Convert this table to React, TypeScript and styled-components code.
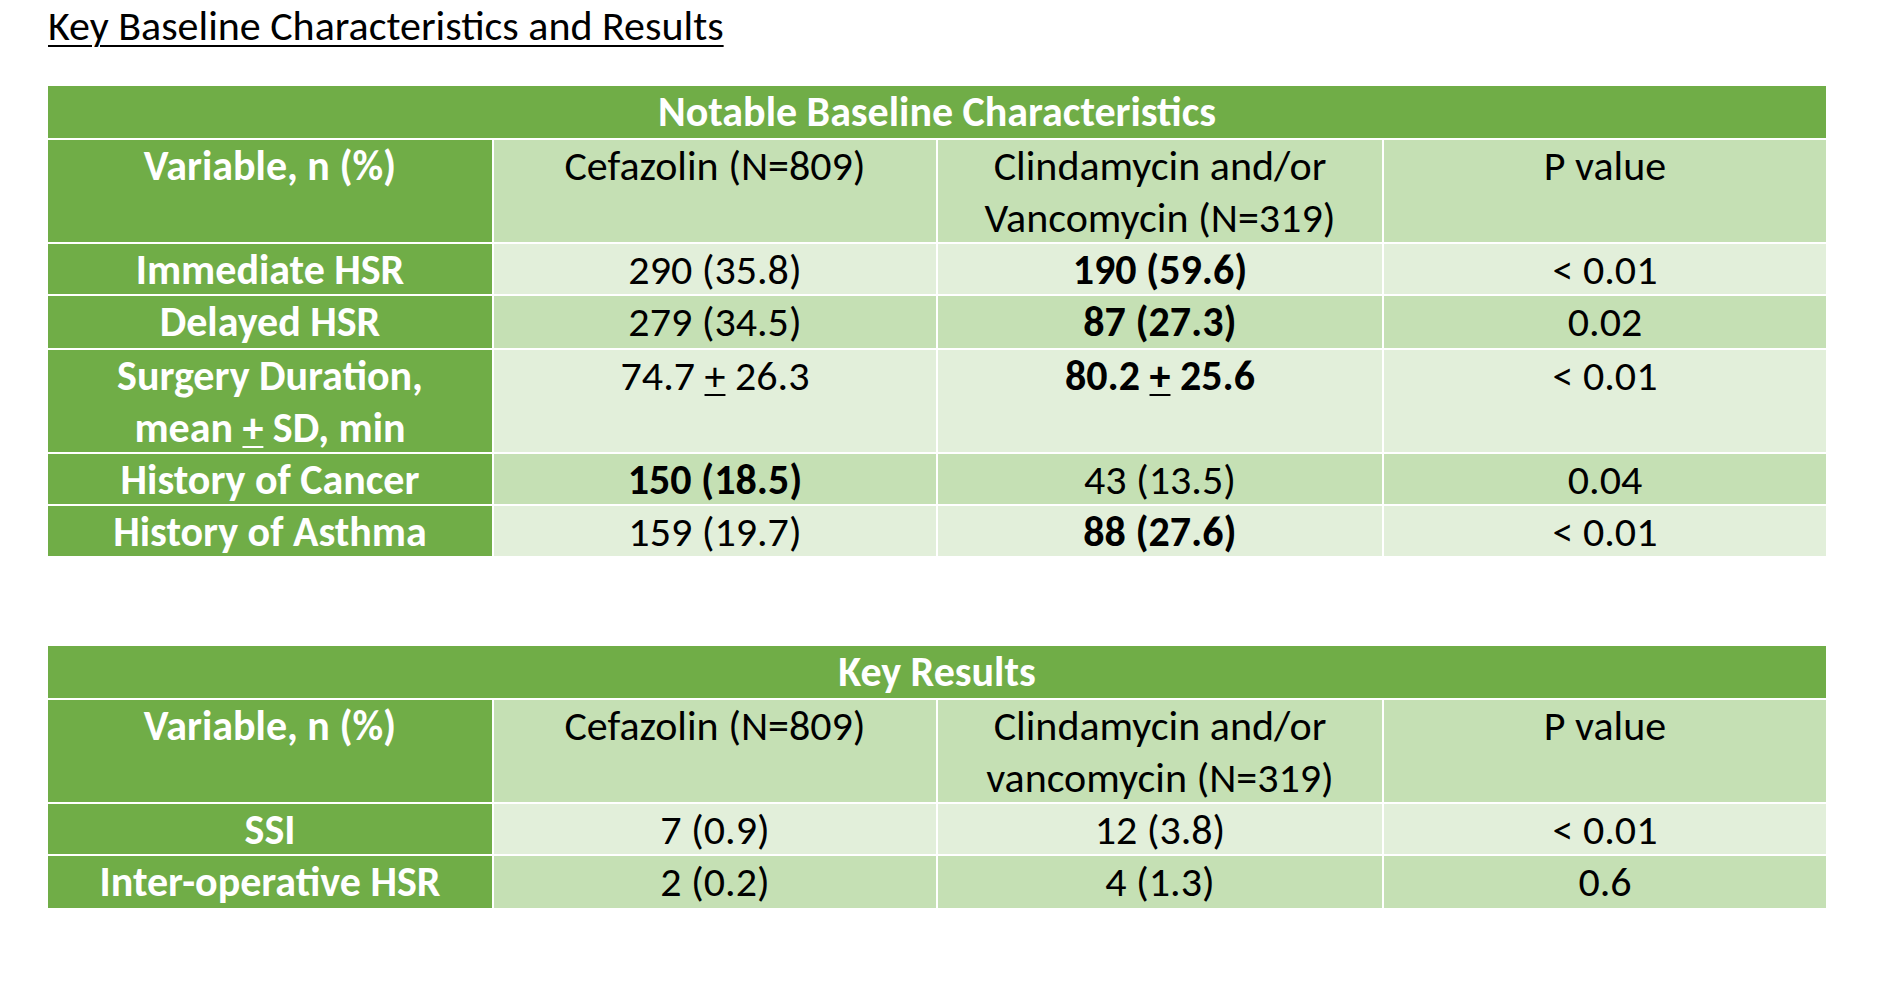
import React from 'react';
import styled, { createGlobalStyle } from 'styled-components';

type Tone = 'dark' | 'mid' | 'light';

interface Row {
  label: string;
  values: React.ReactNode[];
  bold?: boolean[];
  tone: Tone;
}

interface TableSpec {
  title: string;
  groupB: React.ReactNode;
  rowHeights: string;
  rows: Row[];
}

const GlobalStyle = createGlobalStyle`
  body {
    margin: 0;
    background: #ffffff;
    font-family: "Carlito", "Lato", "Liberation Sans", sans-serif;
  }
`;

const Page = styled.div`
  padding: 3px 0 60px 48px;
  width: 1778px;
`;

const Heading = styled.h1`
  margin: 0;
  font-size: 42px;
  font-weight: 400;
  line-height: 46px;
  color: #000;
  text-decoration: underline;
  text-decoration-thickness: 2px;
  text-underline-offset: 5px;
  display: inline-block;
`;

const Tables = styled.div`
  display: flex;
  flex-direction: column;
  gap: 90px;
  margin-top: 37px;
`;

const Grid = styled.div<{ $rows: string }>`
  display: grid;
  grid-template-columns: 444px 442px 444px 442px;
  grid-template-rows: ${p => p.$rows};
  gap: 2px;
  background: #ffffff;
`;

const tones: Record<Tone, string> = {
  dark: '#70ad47',
  mid: '#c5e0b4',
  light: '#e2efda',
};

const Cell = styled.div<{ $tone: Tone; $bold?: boolean }>`
  background: ${p => tones[p.$tone]};
  color: ${p => (p.$tone === 'dark' ? '#ffffff' : '#000000')};
  font-weight: ${p => (p.$bold || p.$tone === 'dark' ? 700 : 400)};
  font-size: 42px;
  line-height: 52px;
  text-align: center;
  padding: 0 10px;
  overflow: hidden;
`;

const TitleCell = styled(Cell)`
  grid-column: 1 / -1;
`;

const Text = styled.div`
  margin-top: 0;
`;

const Pm = styled.span`
  text-decoration: underline;
  text-decoration-thickness: 2px;
  text-underline-offset: 4px;
`;

const tables: TableSpec[] = [
  {
    title: 'Notable Baseline Characteristics',
    groupB: (
      <>
        Clindamycin and/or
        <br />
        Vancomycin (N=319)
      </>
    ),
    rowHeights: '52px 102px 50px 52px 102px 50px 50px',
    rows: [
      { label: 'Immediate HSR', values: ['290 (35.8)', '190 (59.6)', '< 0.01'], bold: [false, true, false], tone: 'light' },
      { label: 'Delayed HSR', values: ['279 (34.5)', '87 (27.3)', '0.02'], bold: [false, true, false], tone: 'mid' },
      {
        label: 'Surgery Duration, mean ± SD, min',
        values: [
          <>74.7 <Pm>+</Pm> 26.3</>,
          <>80.2 <Pm>+</Pm> 25.6</>,
          '< 0.01',
        ],
        bold: [false, true, false],
        tone: 'light',
      },
      { label: 'History of Cancer', values: ['150 (18.5)', '43 (13.5)', '0.04'], bold: [true, false, false], tone: 'mid' },
      { label: 'History of Asthma', values: ['159 (19.7)', '88 (27.6)', '< 0.01'], bold: [false, true, false], tone: 'light' },
    ],
  },
  {
    title: 'Key Results',
    groupB: (
      <>
        Clindamycin and/or
        <br />
        vancomycin (N=319)
      </>
    ),
    rowHeights: '52px 102px 50px 52px',
    rows: [
      { label: 'SSI', values: ['7 (0.9)', '12 (3.8)', '< 0.01'], tone: 'light' },
      { label: 'Inter-operative HSR', values: ['2 (0.2)', '4 (1.3)', '0.6'], tone: 'mid' },
    ],
  },
];

const RowLabel: React.FC<{ label: string }> = ({ label }) => {
  if (label.startsWith('Surgery Duration')) {
    return (
      <>
        Surgery Duration,
        <br />
        mean <Pm>+</Pm> SD, min
      </>
    );
  }
  return <>{label}</>;
};

const DataTable: React.FC<{ spec: TableSpec }> = ({ spec }) => (
  <Grid $rows={spec.rowHeights}>
    <TitleCell $tone="dark">
      <Text>{spec.title}</Text>
    </TitleCell>
    <Cell $tone="dark">
      <Text>Variable, n (%)</Text>
    </Cell>
    <Cell $tone="mid">
      <Text>Cefazolin (N=809)</Text>
    </Cell>
    <Cell $tone="mid">
      <Text>{spec.groupB}</Text>
    </Cell>
    <Cell $tone="mid">
      <Text>P value</Text>
    </Cell>
    {spec.rows.map(row => (
      <React.Fragment key={row.label}>
        <Cell $tone="dark">
          <Text>
            <RowLabel label={row.label} />
          </Text>
        </Cell>
        {row.values.map((v, i) => (
          <Cell key={i} $tone={row.tone} $bold={row.bold?.[i]}>
            <Text>{v}</Text>
          </Cell>
        ))}
      </React.Fragment>
    ))}
  </Grid>
);

export default function App() {
  return (
    <Page>
      <GlobalStyle />
      <Heading>Key Baseline Characteristics and Results</Heading>
      <Tables>
        {tables.map(t => (
          <DataTable key={t.title} spec={t} />
        ))}
      </Tables>
    </Page>
  );
}
